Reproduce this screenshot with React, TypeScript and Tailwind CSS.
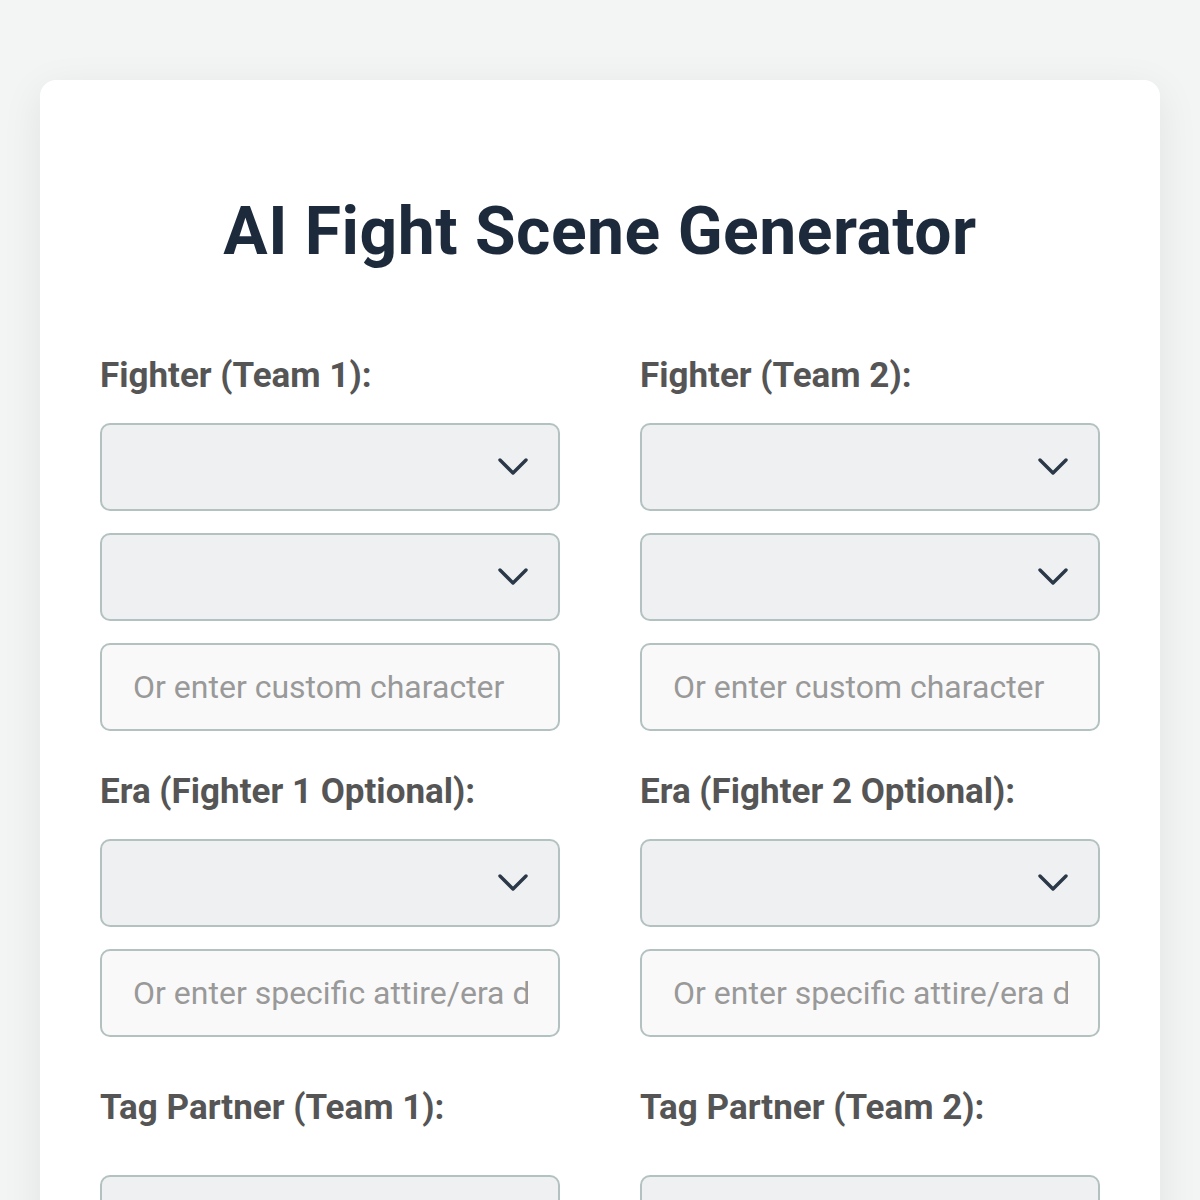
const Chevron = () => (
  <svg width="30" height="18" viewBox="0 0 30 18" fill="none" className="shrink-0">
    <polyline
      points="2,2 15,15 28,2"
      stroke="#2b3848"
      strokeWidth="3.4"
      strokeLinecap="round"
      strokeLinejoin="round"
    />
  </svg>
);

const SelectBox = () => (
  <div className="flex h-[88px] w-full items-center justify-end rounded-[10px] border-2 border-[#b3c1c0] bg-[#eef0f2] pr-[30px]">
    <Chevron />
  </div>
);

const TextBox = ({ placeholder }: { placeholder: string }) => (
  <input
    type="text"
    placeholder={placeholder}
    className="h-[88px] w-full rounded-[10px] border-2 border-[#b3c1c0] bg-[#f9f9f9] pl-[31px] pr-[30px] text-[32px] text-[#333333] outline-none placeholder:text-[#999999]"
  />
);

const Label = ({ children, className = "" }: { children: string; className?: string }) => (
  <div className={`h-[42px] text-[35px] font-bold leading-[42px] text-[#555555] ${className}`}>
    {children}
  </div>
);

const Column = ({ n }: { n: number }) => (
  <div className="flex flex-col">
    <Label>{`Fighter (Team ${n}):`}</Label>
    <div className="mt-[26px] flex flex-col gap-[22px]">
      <SelectBox />
      <SelectBox />
      <TextBox placeholder="Or enter custom character" />
    </div>
    <Label className="mt-[40px]">{`Era (Fighter ${n} Optional):`}</Label>
    <div className="mt-[26px] flex flex-col gap-[22px]">
      <SelectBox />
      <TextBox placeholder="Or enter specific attire/era description" />
    </div>
    <Label className="mt-[50px]">{`Tag Partner (Team ${n}):`}</Label>
    <div className="mt-[46px] flex flex-col gap-[22px]">
      <SelectBox />
      <SelectBox />
    </div>
  </div>
);

export default function App() {
  return (
    <div
      className="min-h-[1200px] bg-[#f3f4f4] px-[40px] pt-[80px]"
      style={{ fontFamily: "Roboto, 'Liberation Sans', sans-serif" }}
    >
      <div className="rounded-[16px] bg-white px-[60px] pb-[60px] pt-[114px] shadow-[0_10px_40px_rgba(0,0,0,0.08)]">
        <h1 className="text-center text-[66px] font-bold leading-[76px] tracking-[0.5px] text-[#1c2a3c]">
          AI Fight Scene Generator
        </h1>
        <div className="mt-[85px] grid grid-cols-2 gap-x-[80px]">
          <Column n={1} />
          <Column n={2} />
        </div>
      </div>
    </div>
  );
}
